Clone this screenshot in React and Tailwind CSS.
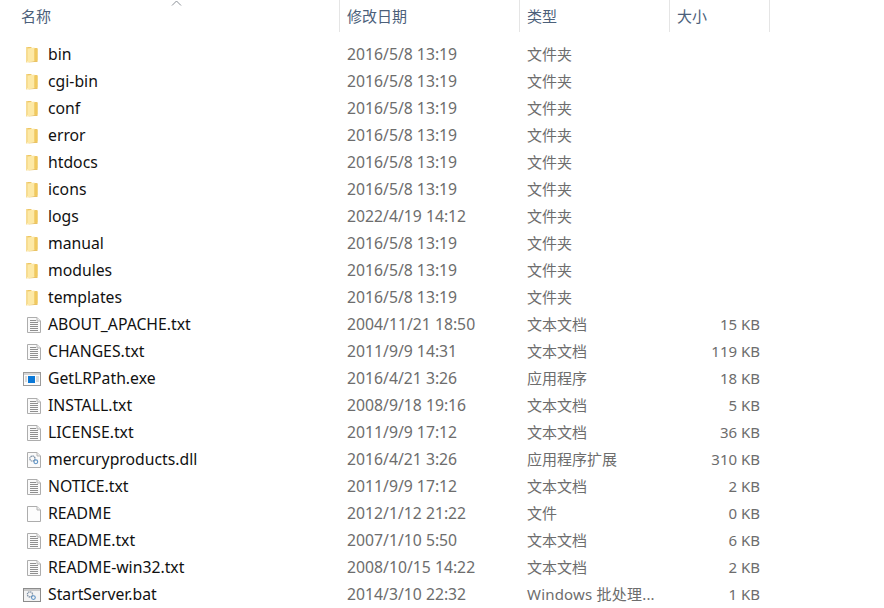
const F = "f", T = "t", E = "e", D = "d", B = "b", N = "n";
const rows = [
  ["bin", "2016/5/8 13:19", "文件夹", "", F],
  ["cgi-bin", "2016/5/8 13:19", "文件夹", "", F],
  ["conf", "2016/5/8 13:19", "文件夹", "", F],
  ["error", "2016/5/8 13:19", "文件夹", "", F],
  ["htdocs", "2016/5/8 13:19", "文件夹", "", F],
  ["icons", "2016/5/8 13:19", "文件夹", "", F],
  ["logs", "2022/4/19 14:12", "文件夹", "", F],
  ["manual", "2016/5/8 13:19", "文件夹", "", F],
  ["modules", "2016/5/8 13:19", "文件夹", "", F],
  ["templates", "2016/5/8 13:19", "文件夹", "", F],
  ["ABOUT_APACHE.txt", "2004/11/21 18:50", "文本文档", "15 KB", T],
  ["CHANGES.txt", "2011/9/9 14:31", "文本文档", "119 KB", T],
  ["GetLRPath.exe", "2016/4/21 3:26", "应用程序", "18 KB", E],
  ["INSTALL.txt", "2008/9/18 19:16", "文本文档", "5 KB", T],
  ["LICENSE.txt", "2011/9/9 17:12", "文本文档", "36 KB", T],
  ["mercuryproducts.dll", "2016/4/21 3:26", "应用程序扩展", "310 KB", D],
  ["NOTICE.txt", "2011/9/9 17:12", "文本文档", "2 KB", T],
  ["README", "2012/1/12 21:22", "文件", "0 KB", N],
  ["README.txt", "2007/1/10 5:50", "文本文档", "6 KB", T],
  ["README-win32.txt", "2008/10/15 14:22", "文本文档", "2 KB", T],
  ["StartServer.bat", "2014/3/10 22:32", "Windows 批处理...", "1 KB", B],
];

function Gear({ cx, cy }) {
  return (
    <g fill="none">
      <circle cx={cx} cy={cy} r="2.6" stroke="#7d8fa3" strokeWidth="1.3" strokeDasharray="1.4 0.6" />
      <circle cx={cx + 3.4} cy={cy + 3.2} r="1.9" stroke="#5f93c4" strokeWidth="1.1" />
    </g>
  );
}

function Icon({ kind }) {
  if (kind === F)
    return (
      <svg width="15" height="18" viewBox="0 0 15 18">
        <path d="M0 1h5l1 1h5.5v13H0z" fill="#eec766" />
        <path d="M0 1h1.5v15.5H0z" fill="#f6dc93" />
        <path d="M1.5 2.5L8.5 1.5V15l-7 1.5z" fill="#fde9a6" />
        <path d="M8.5 3h3v11.5h-3z" fill="#f0c95f" />
        <path d="M1.5 16.5L8.5 15h3v1h-3z" fill="#e9c264" />
      </svg>
    );
  if (kind === E)
    return (
      <svg width="18" height="14" viewBox="0 0 18 14">
        <rect x="0.5" y="0.5" width="17" height="13" fill="#fbfbfb" stroke="#9a9a9a" />
        <rect x="1" y="1" width="16" height="2" fill="#d5d5d5" />
        <rect x="5" y="4" width="7" height="7" fill="#0a78d7" />
        <path d="M2 5h2M2 7h2M2 9h2M13 5h3M13 7h3M13 9h3" stroke="#b8b8b8" />
      </svg>
    );
  if (kind === B)
    return (
      <svg width="18" height="14" viewBox="0 0 18 14">
        <rect x="0.5" y="0.5" width="17" height="13" fill="#f3f3f3" stroke="#8c8c8c" />
        <rect x="1" y="1" width="16" height="2" fill="#c9c9c9" />
        <Gear cx={7} cy={6.4} />
      </svg>
    );
  return (
    <svg width="14" height="16" viewBox="0 0 14 16">
      <path d="M.5.5h9.5l3.5 3.5v11.5H.5z" fill={kind === N ? "#fdfdfd" : "#fafafa"} stroke="#adadad" />
      <path d="M10 .5V4h3.5" fill="#ececec" stroke="#b5b5b5" />
      {kind === T && <path d="M3 3.5h6M3 5.5h8M3 7.5h8M3 9.5h8M3 11.5h8M3 13.5h8" stroke="#8f8f8f" />}
      {kind === D && <Gear cx={5.4} cy={6.6} />}
    </svg>
  );
}

function Head({ w, label }) {
  return (
    <div className={`${w} h-[32px] flex items-center pl-[7px] border-r border-[#e5e5e5] text-[#4c607a]`}>
      {label}
    </div>
  );
}

export default function App() {
  return (
    <div
      className="w-[884px] h-[608px] bg-white overflow-hidden relative text-[15px]"
      style={{ fontFamily: '"Noto Sans", "Noto Sans CJK SC", sans-serif' }}
    >
      <svg className="absolute left-[171px] top-[0px]" width="11" height="6" viewBox="0 0 11 6">
        <path d="M1 5.5l4.5-4.5 4.5 4.5" fill="none" stroke="#8a8f96" />
      </svg>
      <div className="flex h-[32px]">
        <div className="w-[340px] h-[32px] flex items-center pl-[21px] border-r border-[#e5e5e5] text-[#4c607a]">名称</div>
        <Head w="w-[180px]" label="修改日期" />
        <Head w="w-[150px]" label="类型" />
        <Head w="w-[100px]" label="大小" />
      </div>
      <div className="pt-[9px]">
        {rows.map(([name, date, type, size, kind]) => (
          <div key={name} className="flex h-[27px] items-center leading-none">
            <div className="w-[340px] flex items-center">
              <div className="w-[48px] pr-[7px] flex justify-end shrink-0">
                <Icon kind={kind} />
              </div>
              <span className="text-[#111] text-[15.75px] whitespace-nowrap">{name}</span>
            </div>
            <div className="w-[180px] pl-[7px] text-[#6d6d6d] text-[15.75px] whitespace-nowrap">{date}</div>
            <div className="w-[150px] pl-[7px] text-[#6d6d6d] whitespace-nowrap">
              {type.startsWith("Windows") ? (
                <span className="tracking-[0.2px]">{type}</span>
              ) : (
                type
              )}
            </div>
            <div className="w-[90px] text-right text-[#6d6d6d] whitespace-nowrap">{size}</div>
          </div>
        ))}
      </div>
    </div>
  );
}
